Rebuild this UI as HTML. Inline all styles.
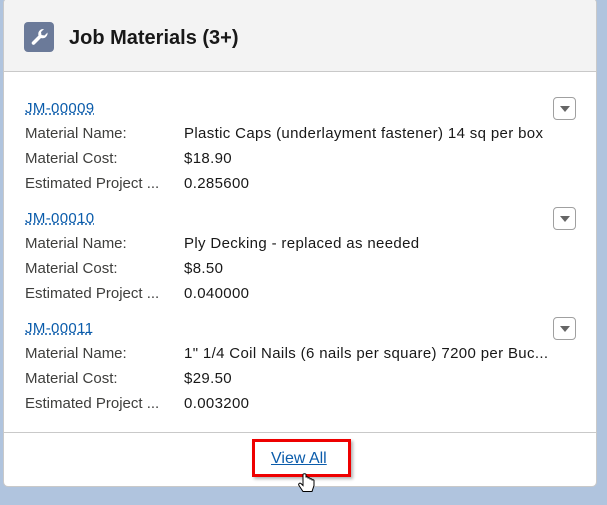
<html><head><style>
body{margin:0;width:607px;height:505px;background:#b0c4de;font-family:"Liberation Sans",sans-serif;position:relative;overflow:hidden}
.card{position:absolute;left:3px;top:-2px;width:594px;height:489px;background:#fff;border:1px solid #c9c9c9;border-radius:5px;box-sizing:border-box;overflow:hidden}
.hd{position:absolute;left:0;top:0;right:0;height:72px;background:#f3f3f3;border-bottom:1px solid #c9c9c9}
.ic{position:absolute;left:20px;top:23px;width:30px;height:30px;background:#6b7a99;border-radius:4px}
.tt{position:absolute;left:65px;top:28px;font-size:20px;font-weight:bold;color:#181818}
.rec{position:absolute;left:21px;font-size:15px;letter-spacing:0.35px;color:#3e3e3c}
.rec div{height:25px;line-height:25px;white-space:nowrap}
.lk{color:#0b5cab;text-decoration:underline dotted;}
.lb{display:inline-block;width:159px;color:#3e3e3c;letter-spacing:0}
.v{color:#181818}
.btn{position:absolute;left:549px;width:23px;height:23px;border:1px solid #a0a0a0;border-radius:4px;box-sizing:border-box}
.btn:after{content:"";position:absolute;left:6px;top:8px;border-left:5px solid transparent;border-right:5px solid transparent;border-top:6px solid #666}
.ft{position:absolute;left:0;right:0;top:433px;border-top:1px solid #c9c9c9}
.va{position:absolute;left:252px;top:439px;width:99px;height:38px;border:3px solid #e00;box-sizing:border-box;box-shadow:2px 2px 3px rgba(0,0,0,.3)}
.va span{position:absolute;left:16px;top:8px;font-size:16px;color:#0b5cab;text-decoration:underline}
</style></head><body>
<div class="card">
<div class="hd"><div class="ic"><svg width="30" height="30" viewBox="0 0 30 30"><path d="M20 7a5 5 0 0 0-5.5 6.5L8 20a1.8 1.8 0 0 0 2.5 2.5l6.5-6.5A5 5 0 0 0 23.5 10.5l-3 3-3-.5-.5-3 3-3z" fill="#fff"/></svg></div><div class="tt">Job Materials (3+)</div></div>
<div class="rec" style="top:97px"><div><span class="lk">JM-00009</span></div><div><span class="lb">Material Name:</span><span class="v">Plastic Caps (underlayment fastener) 14 sq per box</span></div><div><span class="lb">Material Cost:</span><span class="v">$18.90</span></div><div><span class="lb">Estimated Project ...</span><span class="v">0.285600</span></div></div>
<div class="btn" style="top:98px"></div>
<div class="rec" style="top:207px"><div><span class="lk">JM-00010</span></div><div><span class="lb">Material Name:</span><span class="v">Ply Decking - replaced as needed</span></div><div><span class="lb">Material Cost:</span><span class="v">$8.50</span></div><div><span class="lb">Estimated Project ...</span><span class="v">0.040000</span></div></div>
<div class="btn" style="top:208px"></div>
<div class="rec" style="top:317px"><div><span class="lk">JM-00011</span></div><div><span class="lb">Material Name:</span><span class="v">1" 1/4 Coil Nails (6 nails per square) 7200 per Buc...</span></div><div><span class="lb">Material Cost:</span><span class="v">$29.50</span></div><div><span class="lb">Estimated Project ...</span><span class="v">0.003200</span></div></div>
<div class="btn" style="top:318px"></div>
<div class="ft"></div>
</div>
<div class="va"><span>View All</span></div>
<svg style="position:absolute;left:298px;top:473px" width="18" height="22" viewBox="0 0 18 22"><path d="M5 1.5v11l-2-2c-1.5-1-3 .5-2 2l4 6h9l2-6v-5c0-1-2-1-2 0v-1c0-1-2-1-2 0v-1c0-1-2-1-2 0v-1c0-1-2-1-2 0V1.5c0-1-3-1-3 0z" fill="#fff" stroke="#000"/></svg>
</body></html>
